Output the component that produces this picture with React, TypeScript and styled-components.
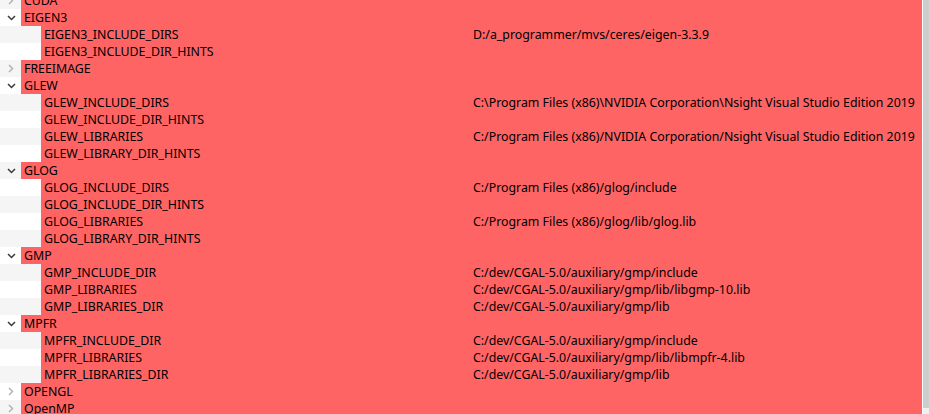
import React, { FC } from "react";
import styled, { createGlobalStyle } from "styled-components";

const GlobalStyle = createGlobalStyle`
  html, body {
    margin: 0;
    padding: 0;
    background: #ffffff;
  }
  body {
    font-family: "Noto Sans", "Liberation Sans", sans-serif;
    font-size: 12.35px;
    color: #000000;
  }
`;

type Entry = { name: string; value?: string };
type Group = { name: string; open: boolean; entries: Entry[] };

const groups: Group[] = [
  { name: "CUDA", open: false, entries: [] },
  {
    name: "EIGEN3",
    open: true,
    entries: [
      { name: "EIGEN3_INCLUDE_DIRS", value: "D:/a_programmer/mvs/ceres/eigen-3.3.9" },
      { name: "EIGEN3_INCLUDE_DIR_HINTS" },
    ],
  },
  { name: "FREEIMAGE", open: false, entries: [] },
  {
    name: "GLEW",
    open: true,
    entries: [
      {
        name: "GLEW_INCLUDE_DIRS",
        value: "C:\\Program Files (x86)\\NVIDIA Corporation\\Nsight Visual Studio Edition 2019",
      },
      { name: "GLEW_INCLUDE_DIR_HINTS" },
      {
        name: "GLEW_LIBRARIES",
        value: "C:/Program Files (x86)/NVIDIA Corporation/Nsight Visual Studio Edition 2019",
      },
      { name: "GLEW_LIBRARY_DIR_HINTS" },
    ],
  },
  {
    name: "GLOG",
    open: true,
    entries: [
      { name: "GLOG_INCLUDE_DIRS", value: "C:/Program Files (x86)/glog/include" },
      { name: "GLOG_INCLUDE_DIR_HINTS" },
      { name: "GLOG_LIBRARIES", value: "C:/Program Files (x86)/glog/lib/glog.lib" },
      { name: "GLOG_LIBRARY_DIR_HINTS" },
    ],
  },
  {
    name: "GMP",
    open: true,
    entries: [
      { name: "GMP_INCLUDE_DIR", value: "C:/dev/CGAL-5.0/auxiliary/gmp/include" },
      { name: "GMP_LIBRARIES", value: "C:/dev/CGAL-5.0/auxiliary/gmp/lib/libgmp-10.lib" },
      { name: "GMP_LIBRARIES_DIR", value: "C:/dev/CGAL-5.0/auxiliary/gmp/lib" },
    ],
  },
  {
    name: "MPFR",
    open: true,
    entries: [
      { name: "MPFR_INCLUDE_DIR", value: "C:/dev/CGAL-5.0/auxiliary/gmp/include" },
      { name: "MPFR_LIBRARIES", value: "C:/dev/CGAL-5.0/auxiliary/gmp/lib/libmpfr-4.lib" },
      { name: "MPFR_LIBRARIES_DIR", value: "C:/dev/CGAL-5.0/auxiliary/gmp/lib" },
    ],
  },
  { name: "OPENGL", open: false, entries: [] },
  { name: "OpenMP", open: false, entries: [] },
];

const StyledWindow = styled.div`
  display: flex;
  width: 929px;
  height: 414px;
  overflow: hidden;
  background: #ffffff;
`;

const StyledTree = styled.div`
  flex: 1;
  overflow: hidden;
`;

const StyledRows = styled.div`
  margin-top: -8px;
`;

const StyledRow = styled.div<{ $alt: boolean }>`
  display: flex;
  height: 17px;
  background: ${(p) => (p.$alt ? "#f5f5f5" : "#ffffff")};
`;

const StyledBranch = styled.div<{ $width: number }>`
  width: ${(p) => p.$width}px;
  flex: none;
  display: flex;
  align-items: center;
  justify-content: center;
  padding-left: 1px;
  box-sizing: border-box;
`;

const StyledCells = styled.div`
  flex: 1;
  display: flex;
  align-items: center;
  background: #ff6464;
  overflow: hidden;
  white-space: nowrap;
`;

const StyledName = styled.div<{ $width: number }>`
  width: ${(p) => p.$width}px;
  flex: none;
  padding-left: 3px;
  box-sizing: border-box;
  line-height: 17px;
`;

const StyledValue = styled.div`
  flex: 1;
  padding-left: 3px;
  line-height: 17px;
  overflow: hidden;
`;

const StyledScrollbar = styled.div`
  width: 7px;
  flex: none;
  display: flex;
  flex-direction: column;
  border-left: 1px solid #ffffff;
  box-sizing: border-box;
  background: #f0f0f0;
`;

const StyledThumb = styled.div`
  height: 408px;
  background: #cdcdcd;
`;

const Chevron: FC<{ open: boolean }> = ({ open }) =>
  open ? (
    <svg width="9" height="6" viewBox="0 0 9 6">
      <path d="M1 1 L4.5 4.5 L8 1" fill="none" stroke="#3a3a3a" strokeWidth="1.5" />
    </svg>
  ) : (
    <svg width="6" height="9" viewBox="0 0 6 9">
      <path d="M1 1 L4.5 4.5 L1 8" fill="none" stroke="#b4b4b4" strokeWidth="1.5" />
    </svg>
  );

const App: FC = () => {
  let index = 0;
  const rows: React.ReactNode[] = [];

  groups.forEach((group) => {
    const alt = index % 2 === 0;
    index++;
    rows.push(
      <StyledRow $alt={alt} key={group.name}>
        <StyledBranch $width={21}>
          <Chevron open={group.open} />
        </StyledBranch>
        <StyledCells>
          <StyledName $width={449}>{group.name}</StyledName>
        </StyledCells>
      </StyledRow>
    );
    group.entries.forEach((entry) => {
      const altChild = index % 2 === 0;
      index++;
      rows.push(
        <StyledRow $alt={altChild} key={entry.name}>
          <StyledBranch $width={41} />
          <StyledCells>
            <StyledName $width={429}>{entry.name}</StyledName>
            <StyledValue>{entry.value}</StyledValue>
          </StyledCells>
        </StyledRow>
      );
    });
  });

  return (
    <>
      <GlobalStyle />
      <StyledWindow>
        <StyledTree>
          <StyledRows>{rows}</StyledRows>
        </StyledTree>
        <StyledScrollbar>
          <StyledThumb />
        </StyledScrollbar>
      </StyledWindow>
    </>
  );
};

export default App;
